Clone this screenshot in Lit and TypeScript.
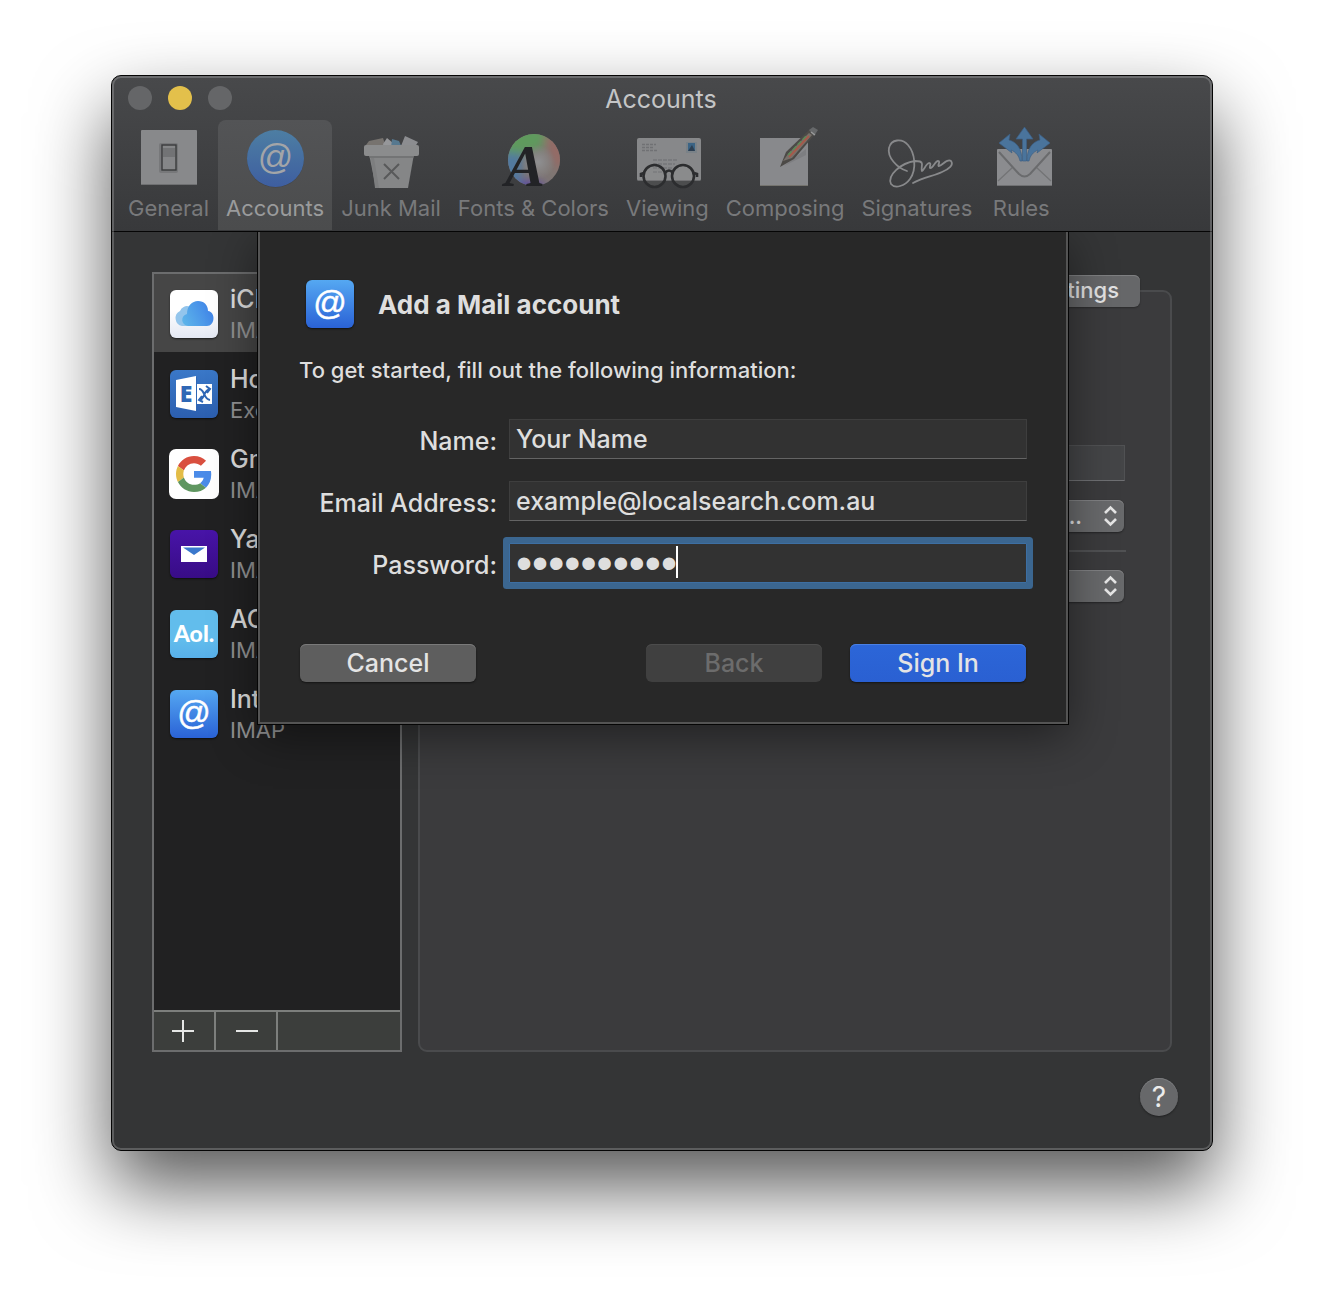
import { LitElement, html, svg, css, TemplateResult } from "lit";
import { customElement, property } from "lit/decorators.js";
import { classMap } from "lit/directives/class-map.js";

/* ---------- toolbar icons, all on a 64 x 64 grid ---------- */

const generalIcon = svg`
  <rect x="4" y="4" width="56" height="55" rx="1" fill="#88898b"/>
  <rect x="4" y="58" width="56" height="1" fill="#6f7072"/>
  <rect x="22" y="17" width="19" height="30" rx="2" fill="#77787a"/>
  <rect x="25" y="19" width="14" height="25" fill="#858688" stroke="#3a3b3d" stroke-width="1.4"/>
  <rect x="26" y="22" width="12" height="9" fill="#727375"/>`;

const accountsIcon = svg`
  <defs><linearGradient id="acc" x1="0" y1="0" x2="0" y2="1">
    <stop offset="0" stop-color="#4d7ea3"/><stop offset="1" stop-color="#3e5ea0"/>
  </linearGradient></defs>
  <circle cx="32.500" cy="33" r="28.500" fill="#333" opacity=".4"/>
  <circle cx="32.500" cy="32.500" r="28.500" fill="url(#acc)"/>
  <text x="32.500" y="42.500" text-anchor="middle" font-family="Liberation Sans" font-size="35" fill="#a3a5a8">@</text>`;

const junkIcon = svg`
  <path d="M7 19l3-4 14-3 3 9H7z" fill="#77736f"/>
  <path d="M24 18l4-6 6 5-3 6-6-1z" fill="#96979a"/>
  <path d="M33 13l7 2 3 7H32z" fill="#56788f"/>
  <path d="M46 10l13 6-5 8-12-4z" fill="#8c8d90"/>
  <path d="M10 28h45l-6 34H17z" fill="#858687"/>
  <path d="M10 30h45l-1 2H11z" fill="#737475"/>
  <rect x="5" y="19" width="55" height="11" rx="2" fill="#8b8c8d"/>
  <path d="M12 32h3l5 30h-4z" fill="#7d7e7f"/>
  <path d="M25 38l15 15M40 38L25 53" stroke="#58595a" stroke-width="2"/>`;

const fontsIcon = svg`
  <defs>
    <radialGradient id="mid"><stop offset="0" stop-color="#8f9092"/><stop offset="1" stop-color="#8f9092" stop-opacity="0"/></radialGradient>
    <clipPath id="ball"><circle cx="33" cy="34" r="26"/></clipPath>
    <filter id="soft" x="-30%" y="-30%" width="160%" height="160%"><feGaussianBlur stdDeviation="4"/></filter>
  </defs>
  <g clip-path="url(#ball)">
    <rect width="64" height="64" fill="#7e7673"/>
    <g filter="url(#soft)">
      <path d="M0 0h46l-5 22-14 4L4 32z" fill="#5f9a5d"/>
      <path d="M0 26l22 2-2 22 6 14H0z" fill="#5179a0"/>
      <path d="M18 54l24 2 2 10H16z" fill="#5b4aa0"/>
      <path d="M44 10l8 0 10 16v20l-6-4z" fill="#9a6862"/>
    </g>
    <circle cx="37" cy="36" r="17" fill="url(#mid)"/>
  </g>
  <text x="24" y="60" text-anchor="middle" font-family="Liberation Serif" font-weight="700" font-style="italic" font-size="60" fill="#222326">A</text>`;

const viewingIcon = svg`
  <g transform="translate(2 0)">
    <rect x="0" y="12" width="64" height="43" rx="2" fill="#87888a"/>
    <rect x="1" y="54" width="62" height="1" fill="#6a6b6d"/>
    <path d="M5 18.500h14M5 21.500h11M5 24.500h15" stroke="#707174" stroke-width="1.300" stroke-dasharray="3 1"/>
    <path d="M16 34h25M16 38h22M16 42h20M16 46h10" stroke="#757679" stroke-width="1.400" stroke-dasharray="4 1"/>
    <rect x="49" y="16" width="11" height="11" fill="#7a8288"/>
    <rect x="51" y="17" width="7" height="8" fill="#3b6485"/>
    <path d="M51 25l4-6 3 6z" fill="#2d3f52"/>
    <g fill="#9a9b9d" fill-opacity=".16" stroke="#2c2d2f" stroke-width="2.600">
      <circle cx="17.500" cy="50" r="11"/><circle cx="46" cy="50" r="11"/>
      <path fill="none" d="M28 47q4-5 8 0M7 47l-3 1v3M57 47l3 1v3"/>
    </g>
  </g>`;

const composingIcon = svg`
  <g transform="translate(2 0)">
    <rect x="5" y="12" width="48" height="48" fill="#88898c"/>
    <rect x="5" y="59" width="48" height="1" fill="#75746f"/>
    <path d="M29 40l22-17v6L33 38z" fill="#7d7e81"/>
    <path d="M25 41l6-15L55 3l6 4-22 26z" fill="#4c4a47"/>
    <path d="M28 35l5-7L54 7l3 2-20 23z" fill="#77706a"/>
    <path d="M34 31L54 10" stroke="#a55a4b" stroke-width="2"/>
    <path d="M33 29L52 9" stroke="#5d8a56" stroke-width="1.500" stroke-dasharray="5 2"/>
    <path d="M54 4l4-3 5 3-4 6z" fill="#66686a"/>
    <path d="M56 6l4 3" stroke="#98999a" stroke-width="1.500"/>
  </g>`;

const signaturesIcon = svg`
  <path transform="translate(3 0)" d="M19 45C9 42-1 31 1 22 3 13 14 12 20 19c7 8 9 24 2 34C17 60 7 63 3 58-1 49 13 37 27 35c4 0 7 0 7 3 0 3-1 6 0 7 2-1 4-7 7-8 3 0 0 4 1 5 3 1 5-7 8-7 3 0-1 5 1 5 3 0 8-8 12-5 3 4-2 8-9 11-8 4-19 5-29 11"
    fill="none" stroke="#88898b" stroke-width="1.800" stroke-linecap="round" stroke-linejoin="round"/>`;

const rulesIcon = svg`
  <g transform="translate(3 0)">
    <rect x="5" y="23" width="55" height="37" rx="1" fill="#8b8c8f"/>
    <path d="M6 55l15-14M59 55L44 41" stroke="#737476" stroke-width="1.300"/>
    <path d="M7 26l20 22q5.500 5 11 0l20-22" fill="none" stroke="#6a6b6d" stroke-width="2"/>
    <rect x="5" y="59" width="55" height="1" fill="#707173"/>
    <g fill="#4a749c" stroke="#3c5f84" stroke-width=".7">
      <path d="M30.500 35V13H24l8.500-12L41 13h-6.500v22z"/>
      <path d="M28 35c-1-5-4-9-9-11l1 3L7 17l11-9-1 6c8 2 13 9 13 21z"/>
      <path d="M37 35c1-5 4-9 9-11l-1 3 13-10-11-9 1 6c-8 2-13 9-13 21z"/>
    </g>
  </g>`;

/* ---------- account tiles, on a 48 x 48 grid ---------- */

const cloudArt = svg`
  <defs><linearGradient id="cl" x1="0" y1="1" x2="1" y2=".6">
    <stop offset="0" stop-color="#5fb8ea"/><stop offset="1" stop-color="#4287e8"/>
  </linearGradient></defs>
  <path d="M12 36A8 8 0 0 1 10 21A7 7 0 0 1 20 17l8 19z" fill="#93c5ec"/>
  <path d="M18 36c-7-1-8-10-1-12 0-8 5-13 11-13 6 0 10 4 10 10 8 1 7 15-1 15z" fill="url(#cl)"/>`;

const exchangeArt = svg`
  <path d="M27 14h15v20H27z" fill="#fff"/>
  <path d="M29 19c6 0 4 10 11 11M29 30c6 0 4-10 11-11M36 16l4 3-3 4M33 32l-4-2 3-4" fill="none" stroke="#2f67b5" stroke-width="2"/>
  <path d="M6 10l20-4v35L6 37z" fill="#fff"/>
  <path d="M26.500 7v33" stroke="#2f67b5"/>
  <text x="16" y="32" text-anchor="middle" font-family="Open Sans" font-weight="800" font-size="23" fill="#2f67b5">E</text>`;

const googleArt = svg`
  <g transform="translate(6 6) scale(.75)">
    <path fill="#d94f3f" d="M24 9.500c3.540 0 6.710 1.220 9.210 3.600l6.850-6.850C35.900 2.380 30.470 0 24 0 14.620 0 6.510 5.380 2.560 13.220l7.980 6.190C12.430 13.720 17.740 9.500 24 9.500z"/>
    <path fill="#4a8be8" d="M46.980 24.550c0-1.570-.15-3.090-.38-4.550H24v9.020h12.940c-.58 2.960-2.260 5.480-4.780 7.180l7.730 6c4.510-4.180 7.090-10.360 7.090-17.650z"/>
    <path fill="#e3bd47" d="M10.530 28.590c-.48-1.450-.76-2.990-.76-4.590s.27-3.140.76-4.590l-7.980-6.190C.92 16.460 0 20.120 0 24c0 3.880.92 7.540 2.560 10.780l7.970-6.190z"/>
    <path fill="#5f9660" d="M24 48c6.480 0 11.930-2.130 15.890-5.810l-7.730-6c-2.150 1.450-4.920 2.300-8.160 2.300-6.260 0-11.570-4.220-13.470-9.910l-7.980 6.190C6.510 42.620 14.620 48 24 48z"/>
  </g>`;

const yahooArt = svg`
  <rect x="11" y="16" width="26" height="16" fill="#fff"/>
  <path d="M13 17.500h22L24 25z" fill="#3a78cc"/>`;

const aolArt = svg`
  <text x="24" y="32" text-anchor="middle" font-family="Lato" font-weight="900" font-size="23" fill="#fff">Aol.</text>`;

const atArt = svg`
  <text x="24" y="33.500" text-anchor="middle" font-family="Liberation Sans" font-size="33" fill="#fff" stroke="#fff" stroke-width=".5">@</text>`;

type Art = TemplateResult | ReturnType<typeof svg>;

const tools: { label: string; art: Art; active?: boolean }[] = [
  { label: "General", art: generalIcon },
  { label: "Accounts", art: accountsIcon, active: true },
  { label: "Junk Mail", art: junkIcon },
  { label: "Fonts & Colors", art: fontsIcon },
  { label: "Viewing", art: viewingIcon },
  { label: "Composing", art: composingIcon },
  { label: "Signatures", art: signaturesIcon },
  { label: "Rules", art: rulesIcon },
];

const accounts: { name: string; kind: string; tile: string; art: Art }[] = [
  { name: "iCloud", kind: "IMAP", tile: "cloud", art: cloudArt },
  { name: "Hotmail", kind: "Exchange", tile: "exchange", art: exchangeArt },
  { name: "Gmail", kind: "IMAP", tile: "google", art: googleArt },
  { name: "Yahoo", kind: "IMAP", tile: "yahoo", art: yahooArt },
  { name: "AOL", kind: "IMAP", tile: "aol", art: aolArt },
  { name: "Internet", kind: "IMAP", tile: "at", art: atArt },
];

@customElement("account-tile")
export class AccountTile extends LitElement {
  @property() kind = "at";
  @property({ attribute: false }) art: Art = atArt;

  static styles = css`
    :host { display: block; flex: none; }
    .tile {
      display: block;
      width: 48px;
      height: 48px;
      border-radius: 6px;
      box-shadow: 0 1px 2px rgba(0, 0, 0, 0.6);
    }
    .cloud { background: linear-gradient(#ffffff 40%, #e4e8f3); }
    .exchange { background: linear-gradient(#3a78c8, #2c5fb0); }
    .google { background: #ffffff; box-shadow: 0 0 0 1px #ffffff; }
    .yahoo { background: linear-gradient(#4814a8, #380c86); }
    .aol { background: linear-gradient(#62bdec 60%, #58b0ea); }
    .at { background: linear-gradient(#55a8f2, #2a62d6); }
  `;

  render() {
    return html`<svg class="tile ${this.kind}" viewBox="0 0 48 48" aria-hidden="true">${this.art}</svg>`;
  }
}

@customElement("add-account-sheet")
export class AddAccountSheet extends LitElement {
  static styles = css`
    :host { display: block; }
    * { box-sizing: border-box; }
    .sheet {
      padding: 48px 39px 40px;
      background: #282828;
      border: 2px solid #545454;
      border-top: 0;
      outline: 1px solid #050505;
      box-shadow: 0 12px 44px rgba(0, 0, 0, 0.45);
      color: #dedede;
      font-size: 25px;
      font-weight: 500;
      line-height: 32px;
    }
    .head { display: flex; align-items: center; gap: 24px; padding-left: 7px; }
    h1 { margin: 0; padding-top: 2px; font-size: 26px; font-weight: 700; line-height: 32px; }
    .intro { margin: 26px 0 33px; font-size: 22px; line-height: 32px; }
    .fields {
      display: grid;
      grid-template-columns: 198px 1fr;
      gap: 22px 12px;
      align-items: center;
    }
    label { text-align: right; padding-top: 4px; }
    .box { position: relative; display: block; }
    input {
      display: block;
      width: 100%;
      height: 40px;
      margin: 0;
      padding: 0 6px;
      border: 1px solid #3e3e3e;
      border-bottom-color: #646464;
      border-radius: 0;
      background: #323232;
      color: #dedede;
      font: inherit;
      outline: none;
      caret-color: transparent;
    }
    .focused {
      border: 1px solid #3d6fa3;
      box-shadow: 0 0 0 6px #3b6690;
      border-radius: 1px;
      font-family: "Liberation Sans", sans-serif;
      font-size: 46px;
      font-weight: 400;
    }
    .caret {
      position: absolute;
      left: 167px;
      top: 3px;
      width: 2px;
      height: 32px;
      background: #ffffff;
    }
    .actions { display: flex; gap: 28px; margin-top: 61px; padding: 0 1px; }
    .actions .cancel { margin-right: auto; }
    button {
      width: 176px;
      height: 38px;
      padding: 0;
      border: 0;
      border-radius: 6px;
      background: #5e5e5e;
      box-shadow: inset 0 1px #7a7a7a, 0 1px 2px rgba(0, 0, 0, 0.5);
      color: #e4e4e4;
      font: inherit;
    }
    button:disabled { background: #404040; color: #6c6c6c; box-shadow: inset 0 1px #4c4c4c; }
    .primary {
      background: linear-gradient(#2c66d8, #2a60d2);
      box-shadow: inset 0 1px #4a80e4, 0 1px 2px rgba(0, 0, 0, 0.5);
    }
  `;

  render() {
    return html`
      <form class="sheet" @submit=${(e: Event) => e.preventDefault()}>
        <div class="head">
          <account-tile kind="at"></account-tile>
          <h1>Add a Mail account</h1>
        </div>
        <p class="intro">To get started, fill out the following information:</p>
        <div class="fields">
          <label for="name">Name:</label>
          <span class="box"><input id="name" type="text" value="Your Name" /></span>
          <label for="email">Email Address:</label>
          <span class="box"><input id="email" type="email" value="example@localsearch.com.au" /></span>
          <label for="password">Password:</label>
          <span class="box">
            <input id="password" class="focused" type="password" value="abcdefghij" />
            <span class="caret"></span>
          </span>
        </div>
        <div class="actions">
          <button type="button" class="cancel">Cancel</button>
          <button type="button" disabled>Back</button>
          <button type="submit" class="primary">Sign In</button>
        </div>
      </form>
    `;
  }
}

@customElement("app-root")
export class AppRoot extends LitElement {
  static styles = css`
    :host {
      display: flex;
      box-sizing: border-box;
      min-height: 100vh;
      padding: 75px 111px 147px;
      background: #ffffff;
      font-family: Inter, "Liberation Sans", sans-serif;
      font-size: 25px;
      color: #dedede;
    }
    * { box-sizing: border-box; }
    button, select, input { font: inherit; }
    .window {
      position: relative;
      flex: 1;
      display: flex;
      flex-direction: column;
      min-width: 0;
      border: 1px solid #050505;
      border-radius: 10px;
      overflow: hidden;
      background: #343536;
    }
    .shade {
      flex: 1;
      display: flex;
      min-width: 0;
      border-radius: 10px;
      box-shadow: 0 36px 76px rgba(0, 0, 0, 0.66);
    }
    .window::after {
      content: "";
      position: absolute;
      inset: 0;
      border: 2px solid rgba(255, 255, 255, 0.2);
      border-radius: 9px;
      pointer-events: none;
    }
    .chrome {
      border-bottom: 1px solid #050505;
      background: linear-gradient(#48494b, #38393b);
    }
    .titlebar {
      display: grid;
      grid-template-columns: 1fr auto 1fr;
      align-items: center;
      height: 44px;
      padding: 0 18px 0 16px;
      color: #c4c5c6;
    }
    .lights { display: flex; gap: 16px; }
    .light { width: 24px; height: 24px; padding: 0; border: 0; border-radius: 50%; background: #656668; }
    .minimise { background: #e3c04b; }
    .title { padding-top: 2px; line-height: 32px; }
    .toolbar { display: flex; gap: 1px; height: 111px; padding: 0 8px 1px; }
    .tool {
      display: flex;
      flex-direction: column;
      align-items: center;
      padding: 6px 8px 0;
      border: 0;
      border-radius: 8px 8px 0 0;
      background: none;
      color: #78797b;
      font-size: 22px;
      line-height: 32px;
      white-space: nowrap;
    }
    .tool svg { width: 64px; height: 64px; margin-bottom: 2px; overflow: visible; }
    .active { background: linear-gradient(#535456, #4b4c4d); color: #9a9b9c; }

    .body {
      position: relative;
      flex: 1;
      display: flex;
      flex-direction: column;
      padding: 40px 40px 34px;
      overflow: hidden;
      background: #343536;
    }
    .sheet { position: absolute; z-index: 2; top: 0; left: 146px; right: 144px; }
    .columns { flex: 1; display: flex; gap: 16px; min-height: 0; }

    .sidebar {
      display: flex;
      flex-direction: column;
      flex: none;
      width: 250px;
      border: 2px solid #6c6d6e;
      background: #212122;
    }
    .list { flex: 1; margin: 0; padding: 0; list-style: none; }
    .account { display: flex; gap: 12px; height: 80px; padding: 16px; }
    .account:first-child { height: 78px; margin-bottom: 2px; background: #464646; }
    .who { margin-top: -7px; }
    .name, .kind { display: block; line-height: 32px; white-space: nowrap; }
    .name { font-weight: 500; }
    .kind { font-size: 22px; line-height: 30px; color: #929293; }
    .edit { display: flex; height: 40px; border-top: 2px solid #7d7f7d; background: #3c3e3c; }
    .edit button {
      display: grid;
      place-items: center;
      width: 62px;
      padding: 0;
      border: 0;
      border-right: 2px solid #7d7f7d;
      background: none;
    }

    .detail { flex: 1; display: flex; flex-direction: column; min-width: 0; padding-top: 3px; }
    .tabs { z-index: 1; display: flex; justify-content: flex-end; margin: 0 32px -17px; }
    .tab {
      height: 32px;
      padding: 0 21px 2px;
      border: 0;
      background: #666769;
      box-shadow: inset 0 1px #7e7f81, 0 1px 2px rgba(0, 0, 0, 0.3);
      color: #e2e2e3;
      font-size: 22px;
      font-weight: 500;
      line-height: 30px;
      white-space: nowrap;
    }
    .tab:first-child { border-radius: 6px 0 0 6px; }
    .tab:last-child { border-radius: 0 6px 6px 0; }
    .panel {
      flex: 1;
      padding: 153px 45px 0 40px;
      border: 2px solid #4a4b4d;
      border-radius: 9px;
      background: #3b3b3d;
    }
    .row { display: grid; grid-template-columns: 180px 1fr; gap: 12px; align-items: center; font-size: 22px; }
    .row label { text-align: right; }
    .row input { width: 100%; height: 36px; padding: 0 7px; border: 1px solid #505153; border-bottom-color: #6e6f72; background: #444547; color: #dedede; }
    .picker { position: relative; display: flex; margin-right: 1px; }
    .picker select {
      width: 100%;
      height: 32px;
      padding: 0 42px 0 12px;
      border: 0;
      border-radius: 6px;
      appearance: none;
      background: #68696b;
      box-shadow: inset 0 1px #808183, 0 1px 2px rgba(0, 0, 0, 0.4);
      color: #e2e2e3;
      font-weight: 500;
      text-align-last: right;
    }
    .picker svg { position: absolute; right: 6px; top: 5px; width: 15px; height: 22px; pointer-events: none; }
    .first { margin-top: 19px; }
    hr { height: 2px; margin: 18px -1px 18px 0; border: 0; background: #505153; }

    .foot { display: flex; justify-content: flex-end; margin: 26px -6px 0 0; }
    .help {
      width: 38px;
      height: 38px;
      padding: 0;
      border: 0;
      border-radius: 50%;
      background: #67686a;
      box-shadow: inset 0 1px #7a7b7d, 0 1px 2px rgba(0, 0, 0, 0.4);
      color: #ececec;
      font-size: 28px;
      line-height: 38px;
    }
  `;

  private stepper() {
    return html`<svg viewBox="0 0 15 22" aria-hidden="true" fill="none" stroke="#e6e6e6" stroke-width="2.600">
      <path d="M2 8l5.500-5.500L13 8M2 14l5.500 5.500L13 14" />
    </svg>`;
  }

  render() {
    return html`
      <div class="shade">
        <main class="window">
          <header class="chrome">
            <div class="titlebar">
              <div class="lights">
                <button class="light" aria-label="Close"></button>
                <button class="light minimise" aria-label="Minimise"></button>
                <button class="light" aria-label="Zoom"></button>
              </div>
              <span class="title">Accounts</span>
            </div>
            <nav class="toolbar">
              ${tools.map((t) => html`
                <button class=${classMap({ tool: true, active: !!t.active })}>
                  <svg viewBox="0 0 64 64" aria-hidden="true">${t.art}</svg>
                  <span>${t.label}</span>
                </button>`)}
            </nav>
          </header>
          <section class="body">
            <div class="columns">
              <aside class="sidebar">
                <ul class="list">
                  ${accounts.map((a) => html`
                    <li class="account">
                      <account-tile .kind=${a.tile} .art=${a.art}></account-tile>
                      <span class="who">
                        <span class="name">${a.name}</span>
                        <span class="kind">${a.kind}</span>
                      </span>
                    </li>`)}
                </ul>
                <div class="edit">
                  <button aria-label="Add account">
                    <svg width="24" height="24" viewBox="0 0 24 24" stroke="#e6e7e6" stroke-width="2"><path d="M0 12h22M11 1v22" /></svg>
                  </button>
                  <button aria-label="Remove account">
                    <svg width="24" height="24" viewBox="0 0 24 24" stroke="#e6e7e6" stroke-width="2"><path d="M2 12h22" /></svg>
                  </button>
                </div>
              </aside>
              <section class="detail">
                <div class="tabs">
                  <button class="tab">Account</button>
                  <button class="tab">Mailboxes</button>
                  <button class="tab">Server Settings</button>
                </div>
                <div class="panel">
                  <div class="row">
                    <label for="desc">Description:</label>
                    <input id="desc" type="text" />
                  </div>
                  <div class="row first">
                    <label for="addr">Email Address:</label>
                    <span class="picker">
                      <select id="addr"><option>Edit Email Addresses...</option></select>
                      ${this.stepper()}
                    </span>
                  </div>
                  <hr />
                  <div class="row">
                    <label for="smtp">Server:</label>
                    <span class="picker">
                      <select id="smtp"><option></option></select>
                      ${this.stepper()}
                    </span>
                  </div>
                </div>
              </section>
            </div>
            <div class="foot"><button class="help" aria-label="Help">?</button></div>
            <add-account-sheet class="sheet"></add-account-sheet>
          </section>
        </main>
      </div>
    `;
  }
}
